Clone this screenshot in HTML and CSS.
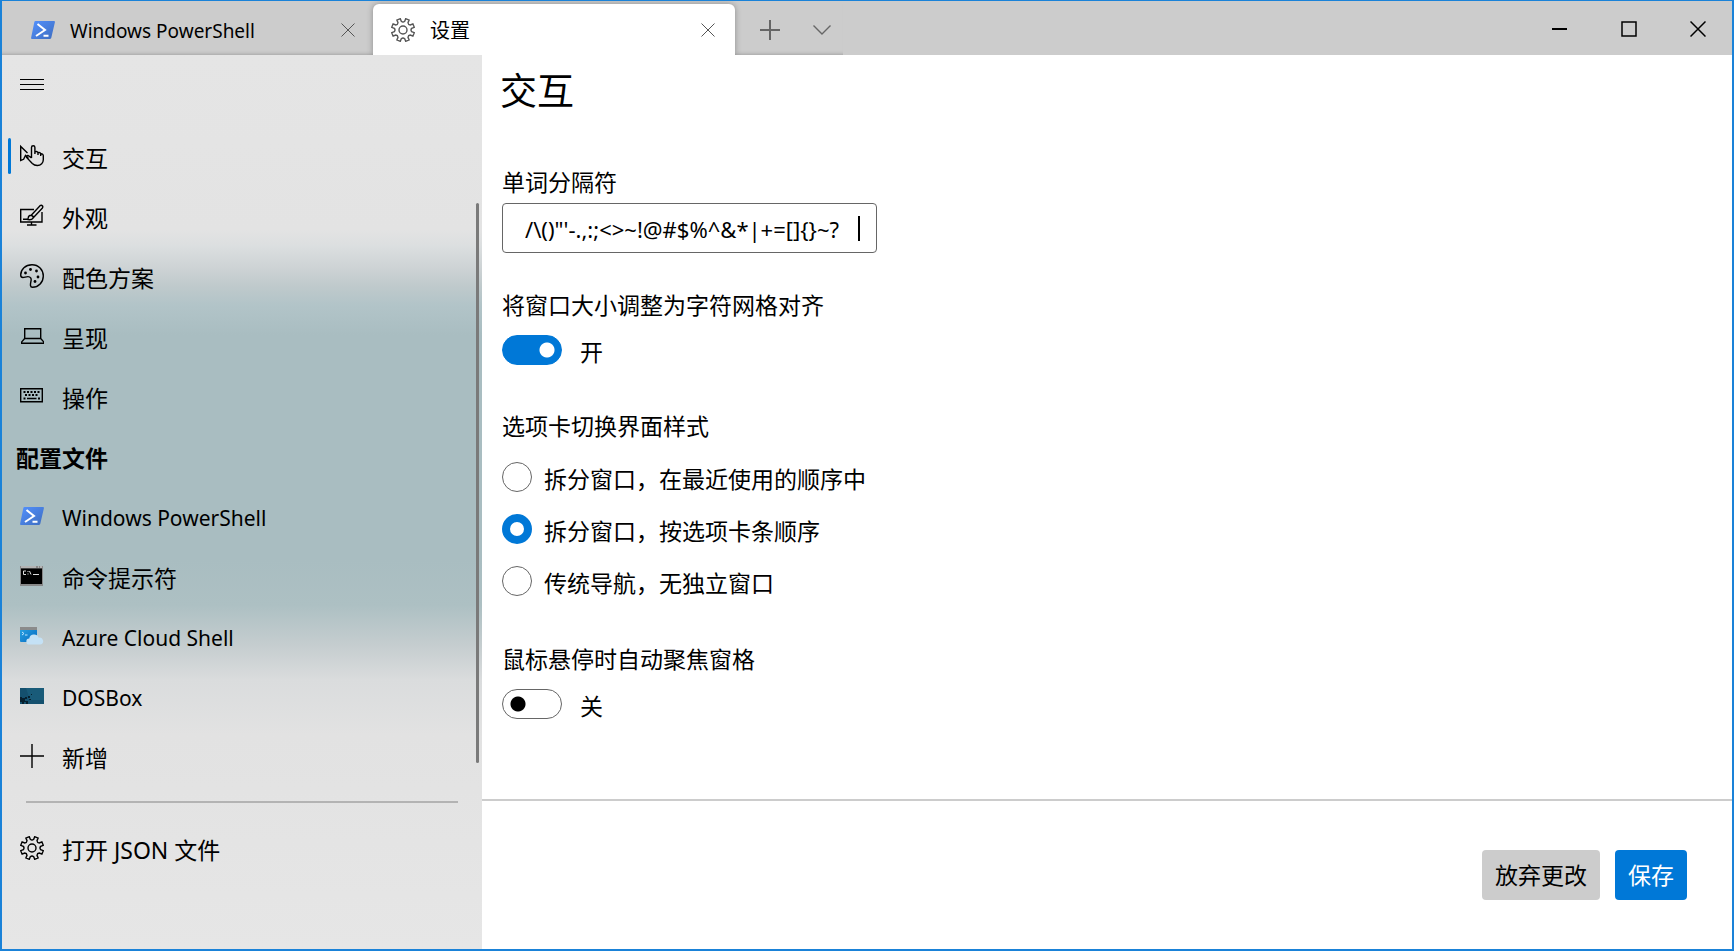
FILE: index.html
```html
<!DOCTYPE html>
<html lang="zh-CN">
<head>
  <meta charset="UTF-8" />
  <meta name="viewport" content="width=device-width, initial-scale=1.0"/>
  <title>设置</title>
  <link rel="stylesheet" href="styles.css">
</head>
<body>
  <!-- shared icons -->
  <svg class="sprite" aria-hidden="true">
    <defs>
      <linearGradient id="psBlue" x1="0" y1="0" x2="1" y2="1">
        <stop offset="0" stop-color="#5391fe"/>
        <stop offset="1" stop-color="#3e6dbf"/>
      </linearGradient>
      <linearGradient id="azBlue" x1="0" y1="0" x2="1" y2="1">
        <stop offset="0" stop-color="#2aa5e4"/>
        <stop offset="1" stop-color="#0569c0"/>
      </linearGradient>
    </defs>
    <symbol id="powershell" viewBox="0 0 24 24">
      <path d="M4.5 3H23a1 1 0 0 1 .9 1.2l-3.6 15.6a1.4 1.4 0 0 1-1.3 1.2H1a1 1 0 0 1-.9-1.2L3.3 4.2A1.4 1.4 0 0 1 4.5 3z" fill="url(#psBlue)"/>
      <path d="M6.5 6l7.5 6-9 6M12.5 17.8h5" fill="none" stroke="#fff" stroke-width="2"/>
    </symbol>
    <symbol id="gear" viewBox="0 0 24 24">
      <path d="M9.3 .7L10.3 3.3Q12 4.7 13.7 3.3L14.7 .7L18.1 2.1L17 4.7Q17.2 6.8 19.3 7L21.9 5.9L23.3 9.3L20.7 10.3Q19.3 12 20.7 13.7L23.3 14.7L21.9 18.1L19.3 17Q17.2 17.2 17 19.3L18.1 21.9L14.7 23.3L13.7 20.7Q12 19.3 10.3 20.7L9.3 23.3L5.9 21.9L7 19.3Q6.8 17.2 4.7 17L2.1 18.1L.7 14.7L3.3 13.7Q4.7 12 3.3 10.3L.7 9.3L2.1 5.9L4.7 7Q6.8 6.8 7 4.7L5.9 2.1Z"/>
      <circle cx="12" cy="12" r="4"/>
    </symbol>
  </svg>

  <div class="window">
    <header class="titlebar">
      <div class="tab">
        <svg class="icon"><use href="#powershell"/></svg>
        <span class="tab-title latin">Windows PowerShell</span>
        <button class="tab-close" aria-label="关闭选项卡"><svg width="14" height="14"><path d="M.5 .5l13 13M13.5 .5l-13 13"/></svg></button>
      </div>
      <div class="tab active">
        <svg class="icon line"><use href="#gear"/></svg>
        <span class="tab-title">设置</span>
        <button class="tab-close" aria-label="关闭选项卡"><svg width="14" height="14"><path d="M.5 .5l13 13M13.5 .5l-13 13"/></svg></button>
      </div>
      <div class="tab-tools">
        <button aria-label="新建选项卡"><svg width="20" height="20"><path d="M10 0v20M0 10h20" stroke-width="2"/></svg></button>
        <button aria-label="更多"><svg width="18" height="10"><path d="M.5 .5L9 9L17.5 .5" stroke-width="1.4"/></svg></button>
      </div>
      <div class="window-controls">
        <button aria-label="最小化"><svg width="16" height="16"><path d="M0 8h15" stroke-width="2"/></svg></button>
        <button aria-label="最大化"><svg width="16" height="16"><path d="M1 1h14v14h-14z" stroke-width="1.5"/></svg></button>
        <button aria-label="关闭"><svg width="16" height="16"><path d="M.5 .5l15 15M15.5 .5l-15 15" stroke-width="1.5"/></svg></button>
      </div>
    </header>

    <div class="body">
      <nav class="sidebar">
        <button class="menu-button" aria-label="菜单"><svg width="24" height="12"><path d="M0 .5h24M0 5.5h24M0 10.5h24"/></svg></button>

        <a class="nav-item selected" href="#">
          <svg class="icon line" viewBox="0 0 24 24">
            <path d="M8.5 14.5L5.5 11.5L3.6 15.3L.7 16.5V2.5L7.5 9"/>
            <path d="M11.5 14V3.5a1.7 1.7 0 0 1 3.4 0V10M15 7.8q2.5-.8 3 1.2V11M18 8.6q2.3-.5 2.7 1.4V12M20.7 9.8q2.6-.2 2.6 2v4c0 3-2.3 5.7-6 5.7q-3 0-5-2L6.6 13.5q-.6-1.8 1.4-2l3.5 2.3"/>
          </svg>
          <span>交互</span>
        </a>
        <a class="nav-item" href="#">
          <svg class="icon line" viewBox="0 0 24 24">
            <path d="M14 5.5H.7v12.5H22V8M11.5 18v3M7 21h9.5M3 15.3h4"/>
            <path d="M11 11.5L20 1.7q1.5-1 2.5.3.7 1-.3 2.2L13.5 13.5M11 11.3q-2.6.2-2.7 2.5-.2 1.4-1.5 1.6 4.5 1.3 6.5-1.6 0-2-2.3-2.5z"/>
          </svg>
          <span>外观</span>
        </a>
        <a class="nav-item" href="#">
          <svg class="icon line" viewBox="0 0 24 24">
            <path d="M12 .7C5.5 .7 .7 5.2 .7 11q0 2.5 2.3 2.5c1.5 0 3-.9 5-.9 2.5 0 3.6 2 3 4.4-.5 2.6-1.5 6.3 1.5 6.3 6 0 10.8-5 10.8-11.3S18.5 .7 12 .7z"/>
            <g class="dots"><circle cx="5.5" cy="9" r="1.4"/><circle cx="10.5" cy="5.5" r="1.4"/><circle cx="16.5" cy="7" r="1.4"/><circle cx="18" cy="13" r="1.4"/><circle cx="15" cy="17.5" r="1.4"/></g>
          </svg>
          <span>配色方案</span>
        </a>
        <a class="nav-item" href="#">
          <svg class="icon line" viewBox="0 0 24 24">
            <path d="M4.7 4.7h16v9.8h-16zM4.7 14.5l-3 3.4v1.3h22v-1.3l-3-3.4"/>
          </svg>
          <span>呈现</span>
        </a>
        <a class="nav-item" href="#">
          <svg class="icon line" viewBox="0 0 24 24">
            <path d="M.7 4.7h21.6v13H.7z"/>
            <path d="M3.5 8h16.5M5 11h14M3.5 14.5h2M18 14.5h2" stroke-width="2" stroke-dasharray="2 1.5"/><path d="M7 14.5h9.5" stroke-width="1.5"/>
          </svg>
          <span>操作</span>
        </a>

        <h2 class="nav-header"><span>配置文件</span></h2>

        <a class="nav-item" href="#">
          <svg class="icon"><use href="#powershell"/></svg>
          <span class="latin">Windows PowerShell</span>
        </a>
        <a class="nav-item" href="#">
          <svg class="icon" viewBox="0 0 24 24">
            <path d="M0 2h23v20H0z" fill="#888"/><path d="M1 4.5h21V20H1z" fill="#000"/><path d="M1 2.5h15v1H1zM18 2.5h1v1h-1zM20 2.5h2v1h-2z" fill="#ddd"/>
            <path d="M6 7H3.5v3.5H6M8 7v1M8 9.5v1M9.5 7l1.5 3.5M13 10.5h6" fill="none" stroke="#ddd"/>
          </svg>
          <span>命令提示符</span>
        </a>
        <a class="nav-item" href="#">
          <svg class="icon" viewBox="0 0 24 24">
            <path d="M0 3h17v15H1q-1 0-1-1z" fill="url(#azBlue)"/><path d="M0 3h17v3H0z" fill="#8b8b8b"/>
            <path d="M2 8l2 1.5-2 1.5M5 11h2.5" fill="none" stroke="#bfe4ff"/>
            <path d="M9.5 20.5a3 3 0 0 1-.3-6 5 5 0 0 1 9.5-.8 3.4 3.4 0 0 1 1.8 6.8z" fill="#c4e1f5"/>
          </svg>
          <span class="latin">Azure Cloud Shell</span>
        </a>
        <a class="nav-item" href="#">
          <svg class="icon" viewBox="0 0 24 24">
            <path d="M0 4h24v16H0z" fill="#14506e"/><path d="M6 4h18v12H10z" fill="#195b79"/>
            <path d="M0 13h2v1h3v-1h2v2H5v2h3v3H6v-2H4v2H2v-2H0zM8 12h2v2H8zM11 10h1v1h-1zM9 15h2v1H9z" fill="#06202f"/>
          </svg>
          <span class="latin">DOSBox</span>
        </a>
        <a class="nav-item" href="#">
          <svg class="icon line" viewBox="0 0 24 24"><path d="M12 0v24M0 12h24"/></svg>
          <span>新增</span>
        </a>
        <hr>
        <a class="nav-item" href="#">
          <svg class="icon line"><use href="#gear"/></svg>
          <span>打开 JSON 文件</span>
        </a>
        <div class="scrollbar"></div>
      </nav>

      <main class="content">
        <form class="settings" id="settings">
          <h1>交互</h1>

          <div class="field">
            <label class="field-label" for="delimiters">单词分隔符</label>
            <div class="textbox">
              <input type="text" id="delimiters" value="/\()&quot;'-.,:;&lt;&gt;~!@#$%^&amp;*|+=[]{}~?">
              <span class="caret"></span>
            </div>
          </div>

          <div class="field wide">
            <label class="field-label" for="snapToGrid">将窗口大小调整为字符网格对齐</label>
            <div class="switch">
              <input type="checkbox" id="snapToGrid" role="switch" checked>
              <span>开</span>
            </div>
          </div>

          <fieldset class="field">
            <legend class="field-label">选项卡切换界面样式</legend>
            <label class="radio"><input type="radio" name="switcher"><span>拆分窗口，在最近使用的顺序中</span></label>
            <label class="radio"><input type="radio" name="switcher" checked><span>拆分窗口，按选项卡条顺序</span></label>
            <label class="radio"><input type="radio" name="switcher"><span>传统导航，无独立窗口</span></label>
          </fieldset>

          <div class="field">
            <label class="field-label" for="focusFollow">鼠标悬停时自动聚焦窗格</label>
            <div class="switch">
              <input type="checkbox" id="focusFollow" role="switch">
              <span>关</span>
            </div>
          </div>
        </form>

        <footer class="actions">
          <button class="btn" type="reset" form="settings">放弃更改</button>
          <button class="btn primary" type="submit" form="settings">保存</button>
        </footer>
      </main>
    </div>
  </div>
</body>
</html>
```
FILE: styles.css
```css
:root {
  --accent: #0078d7;
  --frame: #1a82d8;
  --bar: #cccccc;
  --line: #cccccc;
  --border: #666666;
}

* {
  box-sizing: border-box;
}

body {
  margin: 0;
  font-family: 'Noto Sans', 'Noto Sans CJK SC', sans-serif;
  font-size: 23px;
  line-height: 32px;
  color: #000;
}

button, input {
  font: inherit;
  color: inherit;
}

button {
  display: flex;
  align-items: center;
  justify-content: center;
  border: 0;
  padding: 0;
  background: none;
}

svg {
  fill: none;
  stroke: currentColor;
}

.sprite {
  position: absolute;
  width: 0;
  height: 0;
}

#powershell, .icon {
  stroke: none;
}

.icon {
  width: 24px;
  height: 24px;
  flex: none;
}

.icon.line {
  stroke: currentColor;
  stroke-width: 1.4;
}

.dots {
  fill: currentColor;
  stroke: none;
}

.window {
  display: flex;
  flex-direction: column;
  min-height: 100vh;
  border: 2px solid var(--frame);
  border-top-width: 1px;
}

/* title bar */
.titlebar {
  display: flex;
  height: 54px;
  padding-top: 3px;
  background: var(--bar);
}

.tab {
  display: flex;
  align-items: center;
  width: 371px;
  padding: 0 18px 0 29px;
  font-size: 20px;
  box-shadow: inset 0 -4px 4px -4px rgba(0, 0, 0, 0.3);
}

.tab.active {
  width: 362px;
  padding: 0 20px 0 18px;
  background: #fff;
  border-radius: 6px 6px 0 0;
  box-shadow: 0 0 6px rgba(0, 0, 0, 0.3);
  clip-path: inset(-3px -8px 0 -8px);
}

.tab-title {
  flex: 1;
  margin-left: 15px;
  padding-top: 3px;
}

.tab-title.latin {
  font-size: 19px;
}

.tab-close, .tab.active .icon {
  color: #555;
}

.tab-tools {
  display: flex;
  align-items: center;
  gap: 33px;
  width: 108px;
  padding-left: 25px;
  color: #666;
  box-shadow: inset 0 -4px 4px -4px rgba(0, 0, 0, 0.3);
}

.window-controls {
  display: flex;
  margin-left: auto;
}

.window-controls button {
  width: 69px;
  height: 50px;
}

.body {
  flex: 1;
  display: flex;
}

/* sidebar */
.sidebar {
  position: relative;
  width: 480px;
  flex: none;
  background: linear-gradient(#e5e5e5 0, #e3e3e3 175px, #dcdfe0 190px, #ccd2d4 215px, #c0cacc 230px, #b2c4c8 250px, #a9bdc1 280px, #a9bdc1 505px, #adc0c3 550px, #c5cdcf 590px, #dadcdd 625px, #e2e2e2 680px, #e6e6e6 100%);
}

.menu-button {
  width: 56px;
  height: 60px;
  margin-bottom: 11px;
  padding-left: 4px;
}

.nav-item, .nav-header {
  display: flex;
  align-items: center;
  height: 60px;
  color: #000;
  text-decoration: none;
}

.nav-item {
  position: relative;
  gap: 18px;
  padding-left: 18px;
}

.nav-item span, .nav-header span {
  padding-top: 3px;
}

.nav-item .latin {
  font-size: 21px;
}

.nav-item.selected::before {
  content: '';
  position: absolute;
  left: 6px;
  top: 12px;
  width: 3px;
  height: 36px;
  border-radius: 2px;
  background: var(--accent);
}

.nav-header {
  margin: 0;
  padding-left: 14px;
  font-size: 23px;
  font-weight: bold;
}

.sidebar hr {
  margin: 15px 24px;
  border: 0;
  border-top: 2px solid #b3b3b3;
}

.scrollbar {
  position: absolute;
  right: 3px;
  top: 148px;
  width: 3px;
  height: 560px;
  border-radius: 2px;
  background: #7a7a7a;
}

/* settings page */
.content {
  flex: 1;
  display: flex;
  flex-direction: column;
  background: #fff;
}

.settings {
  flex: 1;
  padding: 10px 18px 0;
}

h1 {
  margin: 0 0 49px;
  font-size: 37px;
  line-height: 52px;
  font-weight: normal;
}

.field {
  margin: 0 0 36px;
  padding: 0 0 0 2px;
  border: 0;
}

.field.wide {
  margin-bottom: 45px;
}

.field-label {
  display: block;
  padding: 0;
}

.textbox {
  display: flex;
  align-items: center;
  width: 375px;
  height: 50px;
  margin-top: 5px;
  padding: 0 16px 0 22px;
  border: 1px solid var(--border);
  border-radius: 4px;
}

.textbox input {
  flex: 1;
  min-width: 0;
  padding: 2px 0 0;
  border: 0;
  outline: 0;
  font-size: 22px;
}

.caret {
  width: 2px;
  height: 25px;
  background: #000;
}

.switch {
  display: flex;
  align-items: center;
  gap: 18px;
  height: 30px;
  margin-top: 14px;
}

.switch span, .radio span {
  padding-top: 3px;
}

.switch input {
  appearance: none;
  width: 60px;
  height: 30px;
  margin: 0;
  border: 1px solid var(--border);
  border-radius: 15px;
  background: radial-gradient(circle at 15px 14px, #000 7px, transparent 8px);
}

.switch input:checked {
  border-color: var(--accent);
  background: radial-gradient(circle at 44px 14px, #fff 7px, var(--accent) 8px);
}

.radio {
  display: flex;
  align-items: center;
  gap: 12px;
  height: 52px;
}

legend + .radio {
  margin-top: 9px;
}

.radio input {
  appearance: none;
  width: 30px;
  height: 30px;
  margin: 0;
  border: 1px solid var(--border);
  border-radius: 50%;
}

.radio input:checked {
  border: 8px solid var(--accent);
}

.actions {
  display: flex;
  justify-content: flex-end;
  align-items: center;
  gap: 15px;
  height: 150px;
  padding-right: 45px;
  border-top: 2px solid var(--line);
}

.btn {
  height: 50px;
  padding: 0 13px;
  border-radius: 4px;
  background: var(--bar);
}

.btn.primary {
  background: var(--accent);
  color: #fff;
}
```
